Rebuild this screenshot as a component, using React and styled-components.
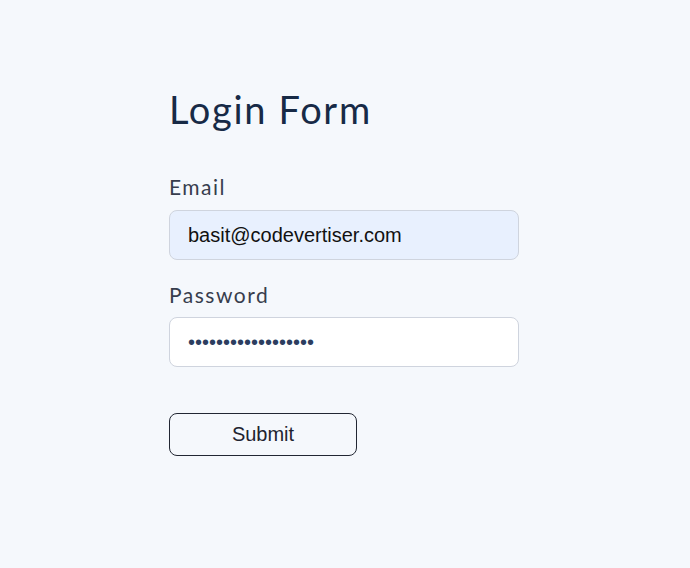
import React from 'react';
import styled, { createGlobalStyle } from 'styled-components';

const GlobalStyle = createGlobalStyle`
    html, body {
        margin: 0;
        padding: 0;
        background: #f5f8fc;
    }
    * {
        box-sizing: border-box;
    }
`;

const Page = styled.div`
    min-height: 568px;
    display: flex;
    justify-content: center;
    padding: 86px 2px 0 0;
    font-family: "Lato", "Noto Sans", sans-serif;
`;

const Form = styled.form`
    width: 350px;
    display: flex;
    flex-direction: column;
`;

const Title = styled.h1`
    margin: 0 0 42px;
    font-size: 38px;
    font-weight: 400;
    letter-spacing: 1.7px;
    line-height: 46px;
    color: #172a46;
`;

const Field = styled.div`
    display: flex;
    flex-direction: column;
    margin-bottom: ${props => props.last ? '46px' : '21px'};
`;

const Label = styled.label`
    font-size: 21px;
    letter-spacing: 1.5px;
    line-height: 26px;
    color: #373d4d;
    margin-top: ${props => props.shift ? '1px' : '0'};
    margin-bottom: ${props => props.shift ? '9px' : '10px'};
`;

const Input = styled.input`
    width: 350px;
    height: 50px;
    border: 1px solid #cfd4de;
    border-radius: 8px;
    padding: 0 18px;
    font-family: "Liberation Sans", Arial, sans-serif;
    font-size: 20px;
    color: #111;
    background: ${props => props.filled ? '#e8f0fe' : '#ffffff'};
    outline: none;
    &[type='password'] {
        color: #2c3e60;
    }
`;

const SubmitButton = styled.button`
    width: 188px;
    height: 43px;
    border: 1px solid #222733;
    border-radius: 8px;
    background: transparent;
    font-family: "Liberation Sans", Arial, sans-serif;
    font-size: 20px;
    color: #1f2430;
    cursor: pointer;
`;

export default function App() {
    return (
        <>
            <GlobalStyle />
            <Page>
                <Form onSubmit={e => e.preventDefault()}>
                    <Title>Login Form</Title>
                    <Field>
                        <Label htmlFor="email">Email</Label>
                        <Input id="email" type="email" filled defaultValue="basit@codevertiser.com" />
                    </Field>
                    <Field last>
                        <Label htmlFor="password" shift>Password</Label>
                        <Input id="password" type="password" defaultValue="codevertiser123456" />
                    </Field>
                    <div>
                        <SubmitButton type="submit">Submit</SubmitButton>
                    </div>
                </Form>
            </Page>
        </>
    );
}
